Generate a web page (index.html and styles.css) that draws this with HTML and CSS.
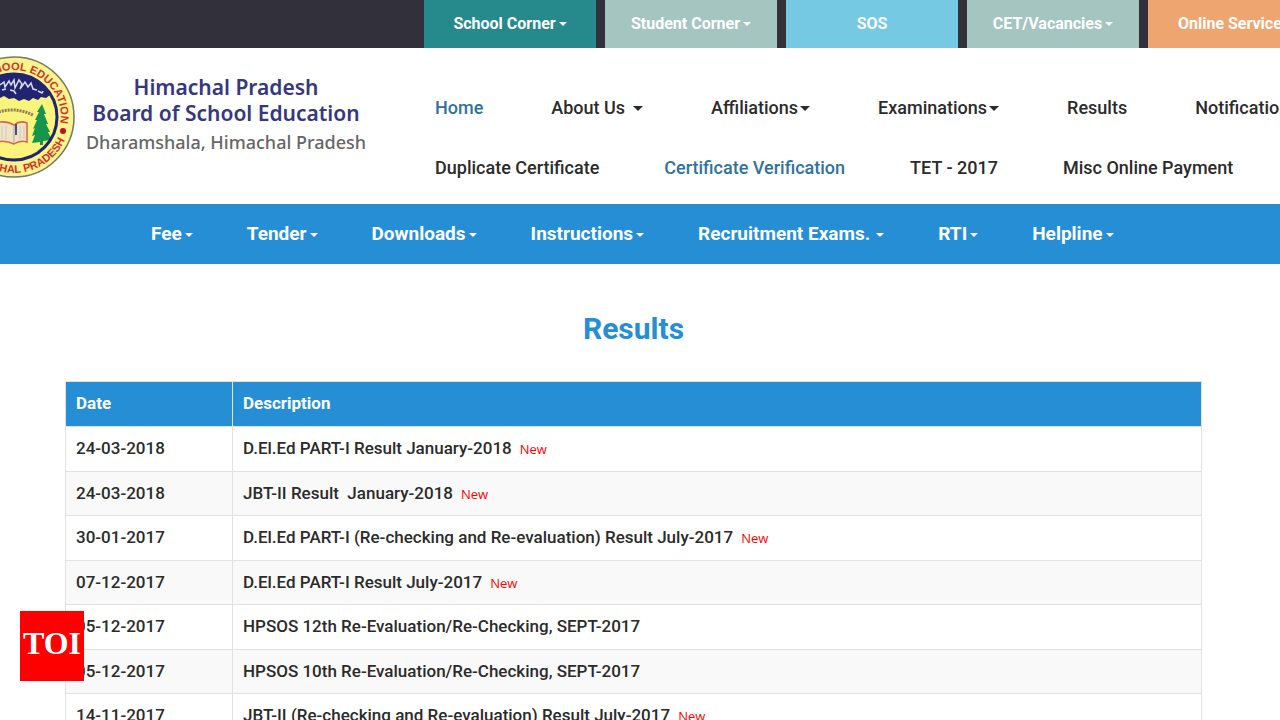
FILE: index.html
```html
<!DOCTYPE html>
<html lang="en">
<head>
<meta charset="utf-8">
<title>Himachal Pradesh Board of School Education - Results</title>
<link rel="stylesheet" href="styles.css">
</head>
<body>
<nav class="topbar" aria-label="Portals">
  <a class="tab tab-teal" href="#school">School Corner<span class="caret"></span></a>
  <a class="tab tab-sage" href="#student">Student Corner<span class="caret"></span></a>
  <a class="tab tab-sky" href="#sos">SOS</a>
  <a class="tab tab-sage" href="#cet">CET/Vacancies<span class="caret"></span></a>
  <a class="tab tab-orange" href="#online">Online Services</a>
</nav>
<header class="header">
  <div class="brand">
    <svg class="emblem" viewBox="0 0 76 124" role="img" aria-label="Board emblem">
      <defs>
        <path id="ring-top" d="M-33 62A47 47 0 0 1 61 62A47 47 0 0 1 60 68"/>
        <path id="ring-bottom" d="M-42 62A56 56 0 0 0 65 85"/>
        <clipPath id="disc"><circle cx="14" cy="62" r="43"/></clipPath>
      </defs>
      <circle cx="14" cy="62" r="60" fill="#fbf38c" stroke="#77775c" stroke-width="1.5"/>
      <circle cx="14" cy="62" r="43" fill="#faf37c"/>
      <g clip-path="url(#disc)">
        <path d="M-30 15H60V41L54 42 50 40 46 43 41 42 38 45 33 43 29 46 24 44 19 46 14 43 9 44 4 41 0 43-30 42Z" fill="#202471"/>
        <path d="M0 30l4-3 1 5 4-6 2 4 3-5 1 8 4-8 3 4-2 5 5-7 3 5 3-4 2 6 4 1M10 35l4 1 2 3M38 36l4 2 1-2M2 35l4-1" fill="none" stroke="#d9dced" stroke-width="1.5"/>
        <path d="M-4 58Q14 51 33 60" fill="none" stroke="#8d7861" stroke-width="3" stroke-dasharray="2 1"/>
        <path d="M42 49l-5 8 2 0-4 8 2 0-4 9 2-1-3 8 3-1-3 8 8-1v3h3v-4l9-1-4-8 2 0-4-8 2 0-4-10 2 0Z" fill="#16964a"/>
      </g>
      <path d="M-4 68Q6 65 14 70Q20 65 27 68V87Q20 85 14 89Q6 85-4 87Z" fill="#eee3c8" stroke="#d5654b" stroke-width="1.5"/>
      <path d="M14 70V88" stroke="#b39f87" stroke-width="1"/>
      <path d="M16 69V80" stroke="#4a4a86" stroke-width="2"/>
      <path d="M2 71v13M6 71v14M20 71v14M24 71v13" stroke="#d4c7ad" stroke-width="1"/>
      <circle cx="14" cy="62" r="43" fill="none" stroke="#202471" stroke-width="3"/>
      <text class="ring-text"><textPath href="#ring-top" startOffset="100%" text-anchor="end">SCHOOL EDUCATION</textPath></text>
      <text class="ring-text"><textPath href="#ring-bottom" startOffset="100%" text-anchor="end">HIMACHAL PRADESH</textPath></text>
      <circle cx="63" cy="76" r="3" fill="#c00f20"/>
    </svg>
    <div class="brand-text">
      <div class="brand-name">Himachal Pradesh<br>Board of School Education</div>
      <div class="brand-place">Dharamshala, Himachal Pradesh</div>
    </div>
  </div>
  <nav class="mainnav" aria-label="Main">
    <div class="navrow">
      <a class="active" href="#home">Home</a>
      <a href="#about">About Us<span class="caret caret-wide"></span></a>
      <a href="#affiliations">Affiliations<span class="caret"></span></a>
      <a href="#examinations">Examinations<span class="caret"></span></a>
      <a href="#results">Results</a>
      <a href="#notifications">Notifications</a>
    </div>
    <div class="navrow navrow-second">
      <a href="#duplicate">Duplicate Certificate</a>
      <a class="active" href="#verification">Certificate Verification</a>
      <a href="#tet">TET - 2017</a>
      <a href="#payment">Misc Online Payment</a>
    </div>
  </nav>
</header>
<nav class="bluebar" aria-label="Services">
  <a href="#fee">Fee<span class="caret"></span></a>
  <a href="#tender">Tender<span class="caret"></span></a>
  <a href="#downloads">Downloads<span class="caret"></span></a>
  <a href="#instructions">Instructions<span class="caret"></span></a>
  <a href="#recruitment">Recruitment Exams.<span class="caret caret-spaced"></span></a>
  <a href="#rti">RTI<span class="caret"></span></a>
  <a href="#helpline">Helpline<span class="caret"></span></a>
</nav>
<main class="content" id="results">
  <h1>Results</h1>
  <table class="results">
    <thead>
      <tr><th class="col-date" scope="col">Date</th><th scope="col">Description</th></tr>
    </thead>
    <tbody>
      <tr><td>24-03-2018</td><td>D.El.Ed PART-I Result January-2018<span class="new">New</span></td></tr>
      <tr><td>24-03-2018</td><td>JBT-II Result&nbsp; January-2018<span class="new">New</span></td></tr>
      <tr><td>30-01-2017</td><td>D.El.Ed PART-I (Re-checking and Re-evaluation) Result July-2017<span class="new">New</span></td></tr>
      <tr><td>07-12-2017</td><td>D.El.Ed PART-I Result July-2017<span class="new">New</span></td></tr>
      <tr><td>05-12-2017</td><td>HPSOS 12th Re-Evaluation/Re-Checking, SEPT-2017</td></tr>
      <tr><td>05-12-2017</td><td>HPSOS 10th Re-Evaluation/Re-Checking, SEPT-2017</td></tr>
      <tr><td>14-11-2017</td><td>JBT-II (Re-checking and Re-evaluation) Result July-2017<span class="new">New</span></td></tr>
    </tbody>
  </table>
</main>
<div class="toi">TOI</div>
</body>
</html>
```
FILE: styles.css
```css
* { box-sizing: border-box; }
html { overflow: hidden; }
body {
  margin: 0;
  font-family: Roboto, "Liberation Sans", sans-serif;
  font-size: 18px;
  font-weight: 500;
  color: #2b2b2b;
  background: #fff;
}
a { color: inherit; text-decoration: none; white-space: nowrap; }
.caret {
  display: inline-block;
  margin-left: 3px;
  vertical-align: 3px;
  border: 4px solid transparent;
  border-top-color: currentColor;
  border-bottom: 0;
}
.caret-spaced { margin-left: 6px; }
.mainnav .caret { margin-left: 2px; border-width: 5px 5px 0; }
.mainnav .caret-wide { margin-left: 8px; }

.topbar {
  display: flex;
  gap: 9px;
  height: 48px;
  padding-left: 424px;
  background: #31303b;
}
.tab {
  flex: 0 0 172px;
  line-height: 48px;
  text-align: center;
  font-size: 16px;
  font-weight: 700;
  color: #fff;
}
.tab-teal { background: #26898c; }
.tab-sage { background: #a5c5c1; }
.tab-sky { background: #75c9e3; }
.tab-orange { background: #eea570; }

.header { display: flex; height: 156px; }
.brand { display: flex; flex: 0 0 435px; padding-top: 7px; }
.emblem { flex: none; width: 76px; height: 124px; }
.ring-text {
  font-family: "Liberation Sans", Arial, sans-serif;
  font-size: 11px;
  font-weight: 700;
  fill: #cf3328;
}
.brand-text {
  flex: none;
  width: 300px;
  padding-top: 19px;
  text-align: center;
  font-family: "Noto Sans", "Open Sans", sans-serif;
  white-space: nowrap;
}
.brand-name {
  font-size: 21px;
  line-height: 26px;
  font-weight: 600;
  color: #35387f;
}
.brand-place {
  font-size: 18px;
  line-height: 32px;
  color: #666;
}
.mainnav { flex: 1; padding-top: 30px; }
.navrow { display: flex; gap: 68px; line-height: 60px; }
.navrow-second { gap: 65px; }
.active { color: #31719f; }

.bluebar {
  display: flex;
  gap: 54px;
  padding: 0 151px;
  line-height: 60px;
  font-size: 19px;
  font-weight: 700;
  color: #fff;
  background: #258ed4;
}

.content { padding: 0 78px 0 65px; }
h1 {
  margin: 0;
  padding: 45px 0 32px;
  font-size: 30px;
  line-height: 40px;
  font-weight: 700;
  text-align: center;
  color: #258ed4;
}
.results { width: 100%; border-collapse: collapse; font-size: 17px; }
.results th, .results td {
  height: 44px;
  padding: 0 10px 2px;
  border: 1px solid #e2e2e2;
  text-align: left;
  white-space: nowrap;
}
.results th { font-weight: 700; color: #fff; background: #258ed4; }
.results thead th, .results tbody tr:nth-child(odd) td { height: 45px; }
.results tbody tr:nth-child(even) { background: #f9f9f9; }
.col-date { width: 167px; }
.new {
  margin-left: 8px;
  font-family: "Open Sans", sans-serif;
  font-size: 13px;
  font-weight: 400;
  color: #f00;
}
.toi {
  position: fixed;
  left: 20px;
  bottom: 39px;
  width: 64px;
  height: 70px;
  line-height: 64px;
  text-align: center;
  font-family: "Liberation Serif", "Times New Roman", serif;
  font-size: 32px;
  font-weight: 700;
  color: #fff;
  background: #f00;
}
```
